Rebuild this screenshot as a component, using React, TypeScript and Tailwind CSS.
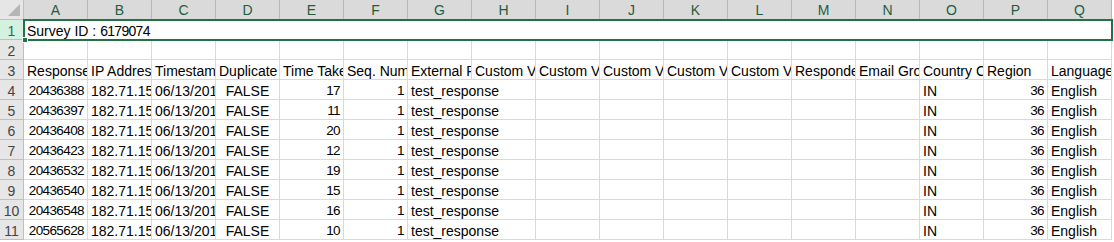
import React from "react";

const cols = "ABCDEFGHIJKLMNOPQ".split("");

const headers = [
  "Response ID",
  "IP Address",
  "Timestamp (mm/dd/yyyy)",
  "Duplicate",
  "Time Taken to Complete (Seconds)",
  "Seq. Number",
  "External Reference",
  "Custom Variable 1",
  "Custom Variable 2",
  "Custom Variable 3",
  "Custom Variable 4",
  "Custom Variable 5",
  "Respondent Email",
  "Email Group",
  "Country Code",
  "Region",
  "Language",
];

const rows: [string, string][] = [
  ["20436388", "17"],
  ["20436397", "11"],
  ["20436408", "20"],
  ["20436423", "12"],
  ["20436532", "19"],
  ["20436540", "15"],
  ["20436548", "16"],
  ["20565628", "10"],
];

type Align = "left" | "right" | "center";

function Cell({
  children,
  align = "left",
  spill = false,
}: {
  children?: React.ReactNode;
  align?: Align;
  spill?: boolean;
}) {
  const base = "h-5 pt-[2px] leading-[18px] whitespace-nowrap border-b border-[#d9d9d9]";
  const edge = spill ? "overflow-visible" : "overflow-hidden border-r";
  // numbers sit right and run a bit narrower, like Calibri digits
  const pos =
    align === "right"
      ? "text-right pr-[3px] text-[13.5px] tracking-[-0.6px]"
      : align === "center"
        ? "text-center"
        : "text-left pl-[3px]";
  return <div className={`${base} ${edge} ${pos}`}>{children}</div>;
}

function RowHead({ n, active = false }: { n: number; active?: boolean }) {
  return (
    <div
      className={
        active
          ? "h-5 pt-[2px] leading-[18px] text-center bg-[#d3f0e0] text-[#217346] border-r border-b border-[#bfbfbf]"
          : "h-5 pt-[2px] leading-[18px] text-center bg-[#e6e6e6] text-[#444] border-r border-b border-[#bfbfbf]"
      }
    >
      {n}
    </div>
  );
}

export default function App() {
  const grid = "grid grid-cols-[24px_repeat(17,64px)]";
  return (
    <div
      className="w-[1114px] h-[242px] overflow-hidden bg-white text-[14px] text-black"
      style={{ fontFamily: '"Liberation Sans", Arial, sans-serif' }}
    >
      {/* column letters */}
      <div className={grid}>
        <div className="relative h-5 bg-[#e6e6e6] border-r border-b border-[#bfbfbf]">
          <svg className="absolute right-[3px] bottom-[3px]" width="12" height="12" viewBox="0 0 12 12">
            <polygon points="12,0 12,12 0,12" fill="#b5b5b5" />
          </svg>
        </div>
        {cols.map((c) => (
          <div
            key={c}
            className="h-5 pt-px leading-[18px] text-center bg-[#dadada] text-[#1f5e3c] border-r border-b border-[#b8b8b8]"
          >
            {c}
          </div>
        ))}
      </div>

      {/* row 1: merged A1:Q1, selected */}
      <div className={`${grid} relative`}>
        <RowHead n={1} active />
        <div className="col-span-17 h-5 pt-[2px] leading-[18px] pl-[3px] whitespace-nowrap">
          Survey ID : <span className="tracking-[-0.7px]">6179074</span>
        </div>
        <div className="absolute left-[23px] right-[1px] top-[-1px] bottom-[-1px] border-2 border-[#217346]" />
        <div className="absolute left-[22px] bottom-[-3px] w-[6px] h-[6px] bg-[#217346] border border-white" />
      </div>

      {/* row 2 */}
      <div className={grid}>
        <RowHead n={2} />
        {cols.map((c) => (
          <Cell key={c} />
        ))}
      </div>

      {/* row 3: field names */}
      <div className={grid}>
        <RowHead n={3} />
        {headers.map((h) => (
          <Cell key={h}>{h}</Cell>
        ))}
      </div>

      {rows.map(([id, taken], i) => (
        <div key={id} className={grid}>
          <RowHead n={i + 4} />
          <Cell align="right">{id}</Cell>
          <Cell>182.71.153.130</Cell>
          <Cell>06/13/2018 10:42</Cell>
          <Cell align="center">FALSE</Cell>
          <Cell align="right">{taken}</Cell>
          <Cell align="right">1</Cell>
          <Cell spill>test_response</Cell>
          <Cell />
          <Cell />
          <Cell />
          <Cell />
          <Cell />
          <Cell />
          <Cell />
          <Cell>IN</Cell>
          <Cell align="right">36</Cell>
          <Cell>English</Cell>
        </div>
      ))}
    </div>
  );
}
